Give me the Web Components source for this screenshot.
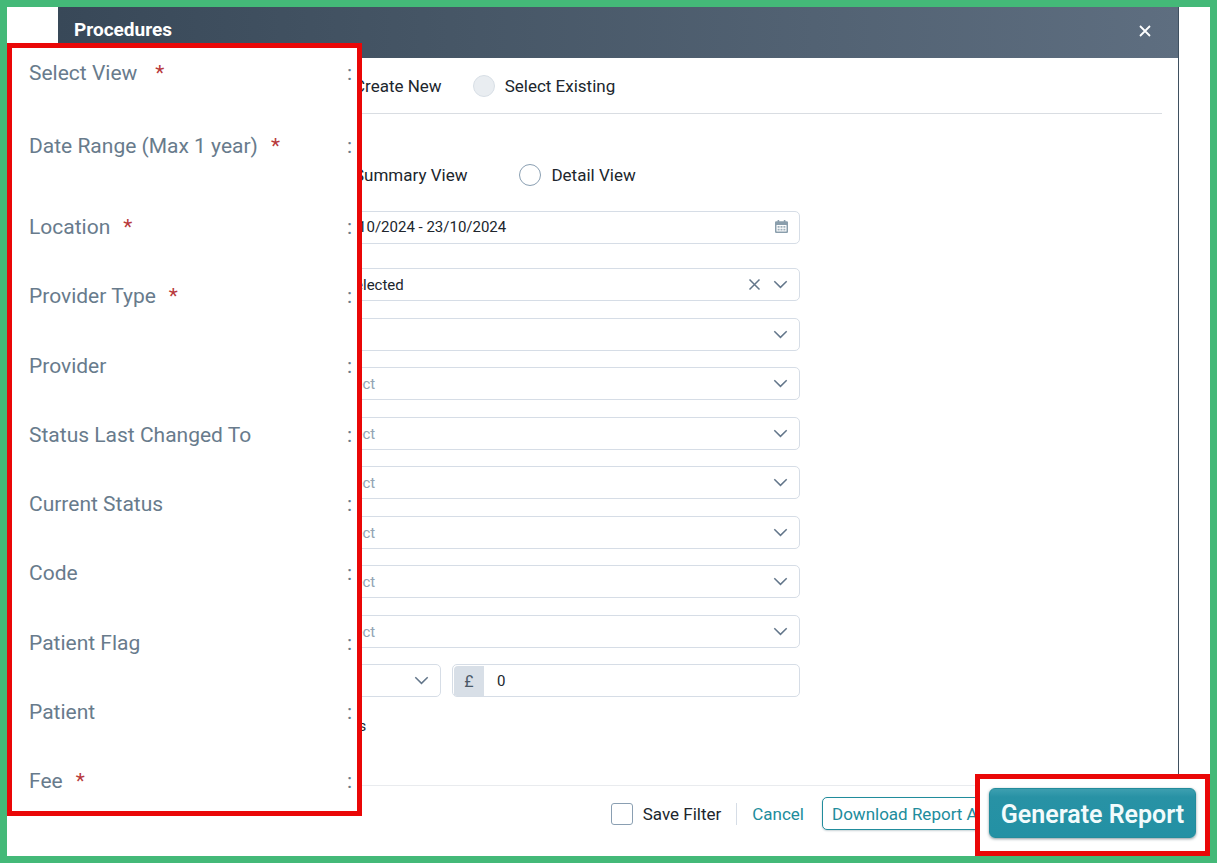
<!DOCTYPE html>
<html lang="en">
<head>
<meta charset="utf-8">
<title>Procedures report</title>
<style>
  body { margin: 0; font-family: Roboto, "Liberation Sans", sans-serif; }
</style>
</head>
<body>
<report-page></report-page>

<template id="t-frame">
  <style>
    :host { display: flex; position: relative; box-sizing: border-box; min-height: 100vh; border: 7px solid #44b978; background: #fff; padding: 0 31px 0 51px; }
    ::slotted(modal-dialog) { flex: 1; min-width: 0; }
  </style>
  <slot></slot>
</template>

<template id="t-dialog">
  <style>
    :host { display: flex; flex-direction: column; }
    header { display: flex; align-items: center; justify-content: space-between; height: 51px; box-sizing: border-box; padding: 0 24px 6px 16px; background: linear-gradient(90deg, #384858, #465666 35%, #5e6e80); border-right: 1px solid #3f5060; color: #fff; }
    h1 { margin: 0; font-size: 19px; line-height: 24px; font-weight: 700; }
    button { display: flex; align-items: center; justify-content: center; width: 18px; height: 18px; padding: 0; border: 0; background: none; margin-top: 2px; }
    main { flex: 1; border-right: 1px solid #3f5060; padding: 0 16px; }
    footer { display: flex; align-items: center; justify-content: flex-end; box-sizing: border-box; height: 71px; padding: 0 173px 15px 16px; border-top: 1px solid #e9ebee; }
  </style>
  <header>
    <h1><slot name="title"></slot></h1>
    <button type="button" aria-label="Close"><svg width="12" height="12" viewBox="0 0 12 12" fill="none" stroke="#fff" stroke-width="1.8"><path d="M1 1 11 11M11 1 1 11"/></svg></button>
  </header>
  <main><slot></slot></main>
  <footer><slot name="footer"></slot></footer>
</template>

<template id="t-field">
  <style>
    :host { display: flex; align-items: center; box-sizing: border-box; height: 33px; border: 1px solid #d6dde6; border-radius: 5px; background: #fff; overflow: hidden; position: relative; }
    .prefix { display: none; align-items: center; justify-content: center; width: 30px; height: 30px; margin: 1px 1px 0 1px; border-radius: 4px 0 0 0; background: #d8dfe7; color: #4b5967; font-size: 16px; }
    :host([prefix]) .prefix { display: flex; }
    .icons { position: absolute; right: 11px; display: flex; align-items: center; gap: 12px; pointer-events: none; }
    svg { display: none; fill: none; stroke: #63768a; stroke-width: 1.5; }
    :host([kind="select"]) .chev, :host([clear]) .x { display: block; }
    :host([kind="date"]) .cal { display: block; }
    ::slotted(*) { flex: 1; min-width: 0; }
  </style>
  <span class="prefix">£</span>
  <slot></slot>
  <span class="icons">
    <svg class="x" width="13" height="13" viewBox="0 0 13 13"><path d="M1.5 1.5 11.5 11.5M11.5 1.5 1.5 11.5"/></svg>
    <svg class="chev" width="15" height="9" viewBox="0 0 15 9"><path d="M1.3 1.2 7.5 7.4 13.7 1.2"/></svg>
    <svg class="cal" width="13" height="15" viewBox="0 0 13 15" style="stroke:none"><path fill="#8a9eac" fill-rule="evenodd" d="M2.6 0h1.6v1.2h4.6V0h1.6v1.2h1.4Q13 1.2 13 2.4v9.4q0 1.2-1.2 1.2H1.2Q0 13 0 11.8V2.4q0-1.2 1.2-1.2h1.4zM1.5 5v6.5h10V5z"/><path fill="#9fb0bb" d="M2.6 6h2v1.8h-2zM5.5 6h2v1.8h-2zM8.4 6h2v1.8h-2zM2.6 8.8h2v1.8h-2zM5.5 8.8h2v1.8h-2zM8.4 8.8h2v1.8h-2z"/></svg>
  </span>
</template>

<template id="t-labels">
  <style>
    :host { position: absolute; top: 36px; bottom: 40px; left: 0; width: 355px; box-sizing: border-box; display: grid; grid-template-rows: 73px 81px repeat(8, minmax(24px, 1fr)) 42px; padding: 13px 5px 0 17px; border: 5px solid #ea0707; background: #fff; color: #687b8c; font-size: 21px; line-height: 24px; }
  </style>
  <slot></slot>
</template>

<template id="t-highlight">
  <style>
    :host { position: absolute; right: 0; bottom: 0; box-sizing: border-box; display: block; padding: 9px; padding-bottom: 13px; border: 5px solid #ea0707; background: #fff; }
    button { display: block; width: 207px; height: 50px; padding: 3px 0 0; border: 1px solid #238c9c; border-radius: 6px; background: linear-gradient(#3d9fb0, #2892a5 8px, #2391a4); box-shadow: 0 1px 3px #8a9a9f; color: #f2fbfc; font: 600 25px/30px Roboto, sans-serif; }
  </style>
  <button type="button"><slot></slot></button>
</template>

<template id="t-page">
  <style>
    :host { display: block; color: #20262d; }
    input, select { font-family: Roboto, "Liberation Sans", sans-serif; color: inherit; }
    form-field select, form-field input { appearance: none; border: 0; outline: 0; background: none; height: 31px; padding: 0 12px; margin: 0; font-size: 15px; opacity: 1; }
    form-field select { padding-left: 11px; }
    form-field.date input { padding-bottom: 2px; }
    form-field select.empty { color: #93a5b4; }
    .opts { display: flex; align-items: center; padding-left: 248px; font-size: 17px; line-height: 22px; }
    .opts label { display: flex; align-items: center; gap: 10px; white-space: nowrap; }
    .mode { height: 55px; gap: 31px; border-bottom: 1px solid #d9dde2; }
    .view { padding-top: 50px; gap: 52px; }
    input[type=radio], input[type=checkbox] { appearance: none; flex: none; width: 22px; height: 22px; margin: 0; border: 1px solid #8a9fb2; border-radius: 50%; background: #fff; }
    input[type=radio]:checked { border: 6px solid #218c9c; }
    input[type=radio]:disabled { background: #e9edf1; border-color: #d8dfe6; }
    input[type=checkbox] { border-radius: 3px; }
    .fields { margin-left: 248px; max-width: 478px; }
    .date { margin: 25px 0 24px; }
    .rows { display: grid; grid-template-rows: repeat(4, 50px 49px) 33px; }
    .fee { display: grid; grid-template-columns: 119px 1fr; gap: 11px; }
    .more { display: flex; align-items: center; gap: 6px; margin-top: 18px; font-size: 15px; line-height: 22px; }
    .more input[type=checkbox] { width: 14px; height: 14px; }
    b { font-weight: 400; color: #b83a3c; margin-left: 13px; }
    .lab { display: flex; }
    .lab::after { content: ":"; margin-left: auto; }
    .lab.wide b { margin-left: 18px; }
    .save { display: flex; align-items: center; gap: 10px; font-size: 17px; white-space: nowrap; }
    .sep { width: 1px; height: 22px; margin: 0 15px; background: #d6dde6; }
    a { color: #218c9c; font-size: 17px; text-decoration: none; margin-right: 18px; }
    .dl { box-sizing: border-box; height: 33px; width: 184px; padding: 0 9px; border: 1px solid #218c9c; border-radius: 5px; background: #fff; box-shadow: 0 1px 2px #c8d2d6; color: #218c9c; font: 17px/22px Roboto, sans-serif; text-align: left; white-space: nowrap; }
  </style>
  <green-frame>
    <modal-dialog>
      <span slot="title">Procedures</span>
      <div class="opts mode">
        <label><input type="radio" name="mode" checked>Create New</label>
        <label><input type="radio" name="mode" disabled>Select Existing</label>
      </div>
      <div class="opts view">
        <label><input type="radio" name="view" id="view" checked>Summary View</label>
        <label><input type="radio" name="view">Detail View</label>
      </div>
      <div class="fields">
        <form-field class="date" kind="date"><input id="date" value="01/10/2024 - 23/10/2024"></form-field>
        <div class="rows">
          <form-field kind="select" clear><select id="location"><option>1 Selected</option></select></form-field>
          <form-field kind="select"><select id="ptype"><option>All</option></select></form-field>
          <form-field kind="select"><select id="provider" class="empty"><option>Select</option></select></form-field>
          <form-field kind="select"><select id="changed" class="empty"><option>Select</option></select></form-field>
          <form-field kind="select"><select id="status" class="empty"><option>Select</option></select></form-field>
          <form-field kind="select"><select id="code" class="empty"><option>Select</option></select></form-field>
          <form-field kind="select"><select id="flag" class="empty"><option>Select</option></select></form-field>
          <form-field kind="select"><select id="patient" class="empty"><option>Select</option></select></form-field>
          <div class="fee">
            <form-field kind="select"><select id="fee"><option>All</option></select></form-field>
            <form-field prefix><input aria-label="Fee amount" value="0"></form-field>
          </div>
        </div>
        <label class="more"><input type="checkbox">Yes</label>
      </div>
      <label slot="footer" class="save"><input type="checkbox">Save Filter</label>
      <span slot="footer" class="sep"></span>
      <a slot="footer" href="#">Cancel</a>
      <button slot="footer" class="dl" type="button">Download Report As</button>
    </modal-dialog>
    <label-callout>
      <label class="lab wide" for="view">Select View<b>*</b></label>
      <label class="lab" for="date">Date Range (Max 1 year)<b>*</b></label>
      <label class="lab" for="location">Location<b>*</b></label>
      <label class="lab" for="ptype">Provider Type<b>*</b></label>
      <label class="lab" for="provider">Provider</label>
      <label class="lab" for="changed">Status Last Changed To</label>
      <label class="lab" for="status">Current Status</label>
      <label class="lab" for="code">Code</label>
      <label class="lab" for="flag">Patient Flag</label>
      <label class="lab" for="patient">Patient</label>
      <label class="lab" for="fee">Fee<b>*</b></label>
    </label-callout>
    <button-callout>Generate Report</button-callout>
  </green-frame>
</template>

<script>
  class Base extends HTMLElement {
    constructor() {
      super();
      const t = document.getElementById(this.constructor.tpl);
      this.attachShadow({ mode: "open" }).append(t.content.cloneNode(true));
    }
  }
  customElements.define("green-frame", class extends Base { static tpl = "t-frame"; });
  customElements.define("modal-dialog", class extends Base { static tpl = "t-dialog"; });
  customElements.define("form-field", class extends Base { static tpl = "t-field"; });
  customElements.define("label-callout", class extends Base { static tpl = "t-labels"; });
  customElements.define("button-callout", class extends Base { static tpl = "t-highlight"; });
  customElements.define("report-page", class extends Base { static tpl = "t-page"; });
</script>
</body>
</html>
